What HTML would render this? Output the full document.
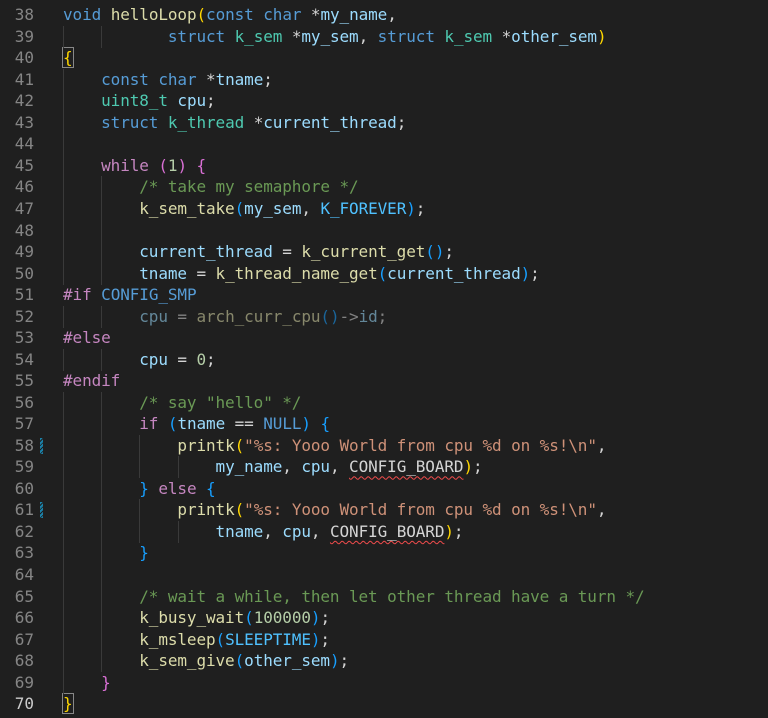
<!DOCTYPE html>
<html><head><style>
body{margin:0;width:768px;height:718px;background:#1f1f1f;overflow:hidden;position:relative;font-family:"DejaVu Sans Mono","Liberation Mono",monospace;font-size:16px}
.l{position:absolute;left:0;height:21.53px;line-height:21.53px;white-space:pre;color:#d4d4d4}
.n{position:absolute;left:0;width:34px;text-align:right;color:#858585}
.c{position:absolute;left:63px;letter-spacing:-0.1px}
.g{position:absolute;width:1px;background:#3a3a3a}
.k{color:#569cd6}.t{color:#4ec9b0}.v{color:#9cdcfe}.f{color:#dcdcaa}.s{color:#ce9178}.m{color:#6a9955}.p{color:#c586c0}.mc{color:#4fc1ff}.num{color:#b5cea8}
.b1{color:#ffd700}.b2{color:#da70d6}.b3{color:#179fff}
.dim{opacity:.55}
.sq{text-decoration:underline wavy #f14c4c;text-underline-offset:3px;text-decoration-thickness:1px}
.mk{position:absolute;left:40px;width:3px;height:16px;background:repeating-linear-gradient(135deg,#1b81a8 0 2px,#1f1f1f 2px 3px)}
</style></head><body>
<div id="code"></div>
<script>
var L=[
'<span class="k">void</span> <span class="f">helloLoop</span><span class="b1">(</span><span class="k">const</span> <span class="k">char</span> *<span class="v">my_name</span>,',
'           <span class="k">struct</span> <span class="t">k_sem</span> *<span class="v">my_sem</span>, <span class="k">struct</span> <span class="t">k_sem</span> *<span class="v">other_sem</span><span class="b1">)</span>',
'<span class="b1" style="outline:1px solid #888">{</span>',
'    <span class="k">const</span> <span class="k">char</span> *<span class="v">tname</span>;',
'    <span class="t">uint8_t</span> <span class="v">cpu</span>;',
'    <span class="k">struct</span> <span class="t">k_thread</span> *<span class="v">current_thread</span>;',
'',
'    <span class="p">while</span> <span class="b2">(</span><span class="num">1</span><span class="b2">)</span> <span class="b2">{</span>',
'        <span class="m">/* take my semaphore */</span>',
'        <span class="f">k_sem_take</span><span class="b3">(</span><span class="v">my_sem</span>, <span class="mc">K_FOREVER</span><span class="b3">)</span>;',
'',
'        <span class="v">current_thread</span> = <span class="f">k_current_get</span><span class="b3">()</span>;',
'        <span class="v">tname</span> = <span class="f">k_thread_name_get</span><span class="b3">(</span><span class="v">current_thread</span><span class="b3">)</span>;',
'<span class="p">#if</span> <span class="k">CONFIG_SMP</span>',
'<span class="dim">        <span class="v">cpu</span> = <span class="f">arch_curr_cpu</span><span class="b3">()</span>-&gt;<span class="v">id</span>;</span>',
'<span class="p">#else</span>',
'        <span class="v">cpu</span> = <span class="num">0</span>;',
'<span class="p">#endif</span>',
'        <span class="m">/* say "hello" */</span>',
'        <span class="p">if</span> <span class="b3">(</span><span class="v">tname</span> == <span class="k">NULL</span><span class="b3">)</span> <span class="b3">{</span>',
'            <span class="f">printk</span><span class="b1">(</span><span class="s">"%s: Yooo World from cpu %d on %s!\\n"</span>,',
'                <span class="v">my_name</span>, <span class="v">cpu</span>, <span class="sq">CONFIG_BOARD</span><span class="b1">)</span>;',
'        <span class="b3">}</span> <span class="p">else</span> <span class="b3">{</span>',
'            <span class="f">printk</span><span class="b1">(</span><span class="s">"%s: Yooo World from cpu %d on %s!\\n"</span>,',
'                <span class="v">tname</span>, <span class="v">cpu</span>, <span class="sq">CONFIG_BOARD</span><span class="b1">)</span>;',
'        <span class="b3">}</span>',
'',
'        <span class="m">/* wait a while, then let other thread have a turn */</span>',
'        <span class="f">k_busy_wait</span><span class="b3">(</span><span class="num">100000</span><span class="b3">)</span>;',
'        <span class="f">k_msleep</span><span class="b3">(</span><span class="mc">SLEEPTIME</span><span class="b3">)</span>;',
'        <span class="f">k_sem_give</span><span class="b3">(</span><span class="v">other_sem</span><span class="b3">)</span>;',
'    <span class="b2">}</span>',
'<span class="b1" style="outline:1px solid #888">}</span>'
];
var T=4.2,H=21.53,h='';
for(var i=0;i<L.length;i++){var y=T+i*H;var nc=(i==32)?'color:#cccccc':'';
h+='<div class="l" style="top:'+y+'px;width:768px"><span class="n" style="'+nc+'">'+(38+i)+'</span><span class="c">'+L[i]+'</span></div>';
if(i==20||i==23)h+='<div class="mk" style="top:'+(y+3)+'px"></div>';}
function G(col,lines){var s='';lines.forEach(function(n){var i=n-38;s+='<div class="g" style="left:'+(63+col*38.2)+'px;top:'+(T+i*H)+'px;height:'+(H+0.5)+'px"></div>';});return s;}
function R(a,b,ex){var r=[];for(var n=a;n<=b;n++)if(ex.indexOf(n)<0)r.push(n);return r;}
h+=G(0,[39].concat(R(41,69,[51,53,55])));
h+=G(1,[39].concat(R(46,68,[51,53,55])));
h+=G(2,[58,59,61,62]);
h+=G(3,[59,62]);
document.getElementById('code').innerHTML=h;
</script>
</body></html>
